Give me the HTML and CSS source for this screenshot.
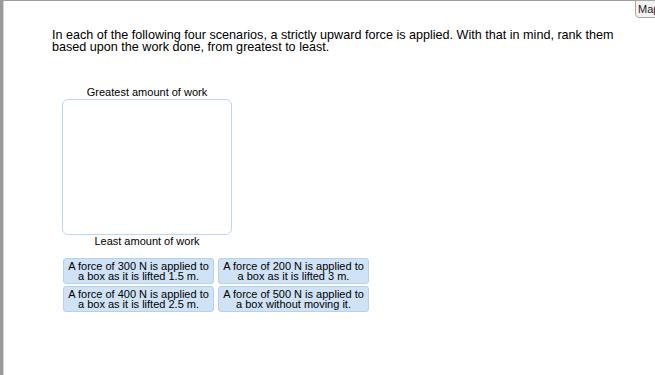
FILE: index.html
```html
<!DOCTYPE html>
<html>
<head>
<meta charset="utf-8">
<link rel="stylesheet" href="styles.css">
</head>
<body>
<div class="frame">
  <div class="map-btn">Map</div>
  <p class="question">In each of the following four scenarios, a strictly upward force is applied. With that in mind, rank them based upon the work done, from greatest to least.</p>
  <div class="rank">
    <div class="label">Greatest amount of work</div>
    <div class="dropzone"></div>
    <div class="label">Least amount of work</div>
  </div>
  <div class="cards">
    <div class="card">A force of 300 N is applied to a box as it is lifted 1.5 m.</div>
    <div class="card">A force of 200 N is applied to a box as it is lifted 3 m.</div>
    <div class="card">A force of 400 N is applied to a box as it is lifted 2.5 m.</div>
    <div class="card">A force of 500 N is applied to a box without moving it.</div>
  </div>
</div>
</body>
</html>
```
FILE: styles.css
```css
html, body {
  margin: 0;
  padding: 0;
  background: #ffffff;
}
body {
  font-family: "Liberation Sans", Arial, sans-serif;
  color: #000;
  width: 655px;
  height: 375px;
  overflow: hidden;
}
.frame {
  position: relative;
  height: 375px;
  box-sizing: border-box;
  border-top: 1px solid #a0a0a0;
  border-left: 3px solid #9a9a9a;
  box-shadow: inset 1px 0 0 #d8d8d8;
  padding: 28px 0 0 49px;
}
.map-btn {
  position: absolute;
  top: -1px;
  right: -6px;
  width: 26px;
  height: 18px;
  box-sizing: border-box;
  border: 1px solid #a8a8a8;
  border-bottom-left-radius: 4px;
  background: #f4f4f4;
  font-size: 11px;
  line-height: 17px;
  padding-left: 2px;
  color: #222;
}
.question {
  margin: 0;
  width: 580px;
  font-size: 12.6px;
  line-height: 12px;
}
.rank {
  width: 170px;
  margin: 33px 0 0 10px;
  display: flex;
  flex-direction: column;
  align-items: center;
}
.label {
  font-size: 11px;
  line-height: 12px;
  height: 12px;
}
.dropzone {
  width: 170px;
  height: 136px;
  box-sizing: border-box;
  margin-top: 1px;
  border: 1px solid #bcd8f2;
  border-radius: 6px;
}
.cards {
  margin: 11px 0 0 11px;
  display: grid;
  grid-template-columns: 151px 151px;
  column-gap: 4px;
  row-gap: 2px;
}
.card {
  box-sizing: border-box;
  height: 26px;
  background: #cfe2f6;
  border: 1px solid #b4d2ee;
  border-radius: 3px;
  font-size: 11px;
  line-height: 10px;
  text-align: center;
  padding: 2px 3px 0;
}
```
